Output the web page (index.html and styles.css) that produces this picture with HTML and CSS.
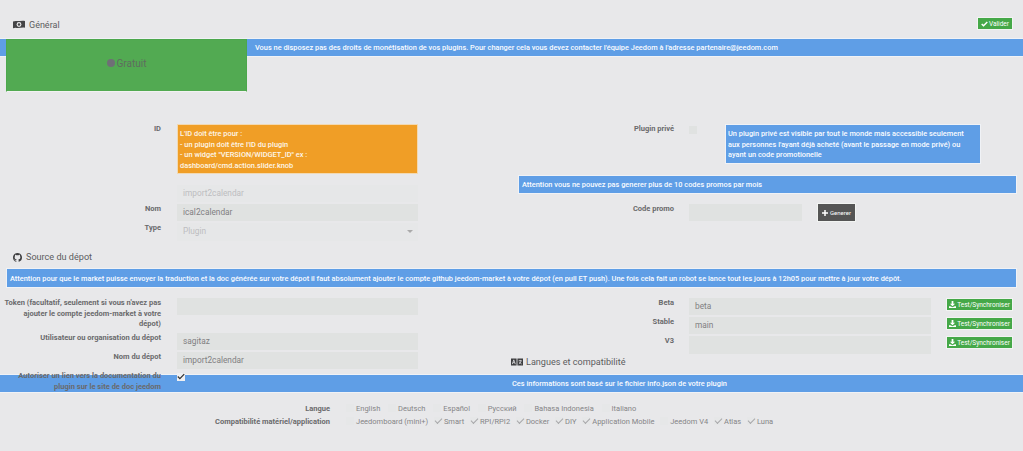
FILE: index.html
```html
<!DOCTYPE html>
<html lang="fr">
<head>
<meta charset="utf-8">
<title>Plugin</title>
<link rel="stylesheet" href="styles.css">
</head>
<body>
<div class="page">
  <header class="top">
    <h3 class="title title-general">
      <svg class="ico-money" viewBox="0 0 14 10"><path fill="#444446" d="M0 1.500 3 .8c3 .8 7-.8 11 0v8c-3-.8-7 .8-11 0l-3 .7z"/><circle cx="7" cy="5" r="2.800" fill="#e8e8ea"/><circle cx="7" cy="5" r="1.400" fill="#444446"/></svg>
      Général
    </h3>
    <a class="btn btn-green btn-valider"><svg class="ico-check" viewBox="0 0 10 8"><path fill="none" stroke="#fff" stroke-width="2" d="M1 4l2.600 2.600L9 1"/></svg>Valider</a>
  </header>

  <section class="monet">
    <div class="gratuit"><span class="dot"></span>Gratuit</div>
    <div class="alert alert-wide">Vous ne disposez pas des droits de monétisation de vos plugins. Pour changer cela vous devez contacter l'équipe Jeedom à l'adresse partenaire@jeedom.com</div>
  </section>

  <section class="cols cols-a">
    <div class="col">
      <div class="row"><label>ID</label><div class="orange">L'ID doit être pour :<br>- un plugin doit être l'ID du plugin<br>- un widget "VERSION/WIDGET_ID" ex :<br>dashboard/cmd.action.slider.knob</div></div>
      <div class="row row-gap"><label></label><div class="input disabled">import2calendar</div></div>
      <div class="row"><label>Nom</label><div class="input">ical2calendar</div></div>
      <div class="row"><label>Type</label><div class="input disabled select">Plugin<span class="caret"></span></div></div>
    </div>
    <div class="col">
      <div class="row row-private">
        <label>Plugin privé</label>
        <span class="box box-private"></span>
        <div class="note">Un plugin privé est visible par tout le monde mais accessible seulement aux personnes l'ayant déjà acheté (avant le passage en mode privé) ou ayant un code promotionelle</div>
      </div>
      <div class="alert alert-promo">Attention vous ne pouvez pas generer plus de 10 codes promos par mois</div>
      <div class="row row-promo">
        <label>Code promo</label>
        <div class="input input-promo"></div>
        <a class="btn btn-dark"><svg class="ico-plus" viewBox="0 0 8 8"><path stroke="#fff" stroke-width="2" d="M4 0v8M0 4h8"/></svg>Generer</a>
      </div>
    </div>
  </section>

  <h3 class="title title-source">
    <svg class="ico-github" viewBox="0 0 16 16"><path fill="#3d3d3f" d="M8 0C3.580 0 0 3.580 0 8c0 3.540 2.290 6.530 5.470 7.590.4.07.55-.17.55-.38 0-.19-.01-.82-.01-1.490-2.010.37-2.530-.49-2.690-.94-.09-.23-.48-.94-.82-1.130-.28-.15-.68-.52-.01-.53.63-.01 1.080.58 1.230.82.72 1.210 1.870.87 2.330.66.07-.52.28-.87.51-1.070-1.780-.2-3.640-.89-3.640-3.950 0-.87.31-1.590.82-2.150-.08-.2-.36-1.020.08-2.120 0 0 .67-.21 2.200.82.64-.18 1.320-.27 2-.27s1.360.09 2 .27c1.530-1.040 2.200-.82 2.200-.82.44 1.100.16 1.920.08 2.120.51.56.82 1.270.82 2.150 0 3.070-1.870 3.750-3.650 3.950.29.25.54.73.54 1.480 0 1.070-.01 1.930-.01 2.200 0 .21.15.46.55.38A8.013 8.013 0 0016 8c0-4.420-3.580-8-8-8z"/></svg>
    Source du dépot
  </h3>
  <div class="alert alert-source">Attention pour que le market puisse envoyer la traduction et la doc générée sur votre dépot il faut absolument ajouter le compte github jeedom-market à votre dépot (en pull ET push). Une fois cela fait un robot se lance tout les jours à 12h05 pour mettre à jour votre dépôt.</div>

  <section class="cols cols-b">
    <div class="col">
      <div class="row row-token"><label>Token (facultatif, seulement si vous n'avez pas ajouter le compte jeedom-market à votre dépot)</label><div class="input"></div></div>
      <div class="row"><label>Utilisateur ou organisation du dépot</label><div class="input">sagitaz</div></div>
      <div class="row"><label>Nom du dépot</label><div class="input">import2calendar</div></div>
      <div class="row row-doc"><label>Autoriser un lien vers la documentation du plugin sur le site de doc jeedom</label><span class="box box-doc"><svg class="ico-check" viewBox="0 0 10 8"><path fill="none" stroke="#333" stroke-width="1.600" d="M1 4l2.600 2.600L9 1"/></svg></span></div>
    </div>
    <div class="col">
      <div class="row row-sync"><label>Beta</label><div class="input">beta</div><a class="btn btn-green btn-sync"><svg class="ico-dl" viewBox="0 0 8 8"><path fill="#fff" d="M3 0h2v3h2L4 6 1 3h2zM0 6h1.500L4 7l2.500-1H8v2H0z"/></svg>Test/Synchroniser</a></div>
      <div class="row row-sync"><label>Stable</label><div class="input">main</div><a class="btn btn-green btn-sync"><svg class="ico-dl" viewBox="0 0 8 8"><path fill="#fff" d="M3 0h2v3h2L4 6 1 3h2zM0 6h1.500L4 7l2.500-1H8v2H0z"/></svg>Test/Synchroniser</a></div>
      <div class="row row-sync"><label>V3</label><div class="input"></div><a class="btn btn-green btn-sync"><svg class="ico-dl" viewBox="0 0 8 8"><path fill="#fff" d="M3 0h2v3h2L4 6 1 3h2zM0 6h1.500L4 7l2.500-1H8v2H0z"/></svg>Test/Synchroniser</a></div>
      <h3 class="title title-lang">
        <svg class="ico-lang" viewBox="0 0 14 8"><path fill="#3d3d3f" d="M0 0h6.500v8H0zM7.500 0H14v8H7.500z"/><path fill="none" stroke="#e8e8ea" stroke-width=".9" d="M1.500 6.500 3.250 1.500 5 6.500M2.200 4.800h2.100M9 2.500h3.500M10.750 1.500v1M11.800 2.500c-.4 2-1.400 3-2.600 3.800M9.700 3.800c.6 1.200 1.500 2 2.700 2.500"/></svg>
        Langues et compatibilité
      </h3>
    </div>
  </section>

  <div class="alert alert-info">Ces informations sont basé sur le fichier info.json de votre plugin</div>

  <section class="opts">
    <div class="opt-row">
      <label>Langue</label>
      <div class="opt-list">
        <span class="opt"><i class="box"></i>English</span>
        <span class="opt"><i class="box"></i>Deutsch</span>
        <span class="opt"><i class="box"></i>Español</span>
        <span class="opt"><i class="box"></i>Русский</span>
        <span class="opt"><i class="box"></i>Bahasa Indonesia</span>
        <span class="opt"><i class="box"></i>Italiano</span>
      </div>
    </div>
    <div class="opt-row">
      <label>Compatibilité matériel/application</label>
      <div class="opt-list opt-list-tight">
        <span class="opt"><i class="box"></i>Jeedomboard (mini+)</span>
        <span class="opt"><i class="box box-on"></i>Smart</span>
        <span class="opt"><i class="box box-on"></i>RPI/RPI2</span>
        <span class="opt"><i class="box box-on"></i>Docker</span>
        <span class="opt"><i class="box box-on"></i>DIY</span>
        <span class="opt"><i class="box box-on"></i>Application Mobile</span>
        <span class="opt"><i class="box"></i>Jeedom V4</span>
        <span class="opt"><i class="box box-on"></i>Atlas</span>
        <span class="opt"><i class="box box-on"></i>Luna</span>
      </div>
    </div>
  </section>
</div>
</body>
</html>
```
FILE: styles.css
```css
* { box-sizing: border-box; }
html, body { margin: 0; padding: 0; height: 100%; overflow: hidden; }
body { background: #e8e8ea; font-family: Roboto, "Liberation Sans", sans-serif; font-size: 7.5px; color: #666; }
.page { width: 1023px; }

.top { height: 38px; display: flex; justify-content: space-between; padding: 17px 10px 0 13px; }
.title { margin: 0; font-weight: 400; display: flex; align-items: center; color: #5c5c5e; }
.title-general { font-size: 9px; height: 15px; gap: 4px; }
.ico-money { width: 12px; height: 9px; }
.btn { display: flex; align-items: center; justify-content: center; color: #fff; border: 1px solid #f2f4f2; }
.btn-green { background: #45a848; }
.btn-valider { width: 36px; height: 13px; font-size: 6.5px; gap: 1px; }
.ico-check { width: 7px; height: 6px; }

.monet { height: 86px; }
.gratuit { float: left; width: 241px; height: 53px; margin: 1px 8px 0 6px; background: #52aa52; border: 1px solid #4ca74c; border-bottom-color: #f2f2f2; display: flex; align-items: center; justify-content: center; font-size: 10px; color: #5f6d5f; padding-bottom: 5px; gap: 2px; }
.dot { width: 8px; height: 8px; border-radius: 50%; background: #6f6f76; }
.alert { background: #5f9ee6; color: #fafcff; border: 1px solid #f0f2f6; font-size: 7.4px; font-weight: 500; display: flex; align-items: center; }
.alert-wide { display: block; height: 19px; line-height: 17px; border-left: 0; border-right: 0; }

.cols { display: grid; grid-template-columns: 512px 511px; }
.cols-a { height: 118px; }
.cols-b { height: 76px; margin-top: 10px; }
.col { display: flex; flex-direction: column; gap: 2px; min-width: 0; }
.row { display: grid; grid-template-columns: 161px 241px; column-gap: 16px; align-items: start; }
.row label { text-align: right; font-weight: 700; color: #6a6a6c; line-height: 10.7px; }
.input { height: 17.2px; background: #e0e2e1; color: #808082; padding-left: 6px; line-height: 17.2px; font-size: 8.3px; position: relative; }
.input.disabled { background: #e6e7e8; color: #bdbdc0; }
.caret { position: absolute; right: 5px; top: 7px; border: 3px solid transparent; border-top: 3px solid #aaa; border-bottom: 0; }
.orange { height: 50px; background: #f09e26; color: #fdf6ea; border: 1px solid #f2d9b2; padding: 4px 2px 0; line-height: 10.7px; font-size: 7.4px; font-weight: 500; }
.row-gap { margin-top: 9px; }

.box { display: block; width: 8px; height: 8px; background: #e0e2e1; }
.box-private { margin-top: 2px; }
.row-private { grid-template-columns: 162px 21px 256px; column-gap: 15px; height: 49px; }
.note { grid-column: 3; height: 40px; background: #5f9ee6; color: #fafcff; border: 1px solid #f0f2f6; padding: 4px 14px 0 2px; line-height: 10.7px; font-size: 7.4px; font-weight: 500; }
.alert-promo { height: 19px; margin: 0 6px; padding-left: 3px; }
.row-promo { grid-template-columns: 162px 113px 39px; column-gap: 15px; margin-top: 8px; }
.input-promo { width: 113px; }
.btn-dark { background: #555; height: 19px; margin-top: -1px; font-size: 6px; gap: 2px; }
.ico-plus { width: 6px; height: 6px; }

.title-source { font-size: 9.1px; gap: 4px; height: 16px; margin: 7px 0 3px 13px; }
.ico-github { width: 9px; height: 9px; }
.alert-source { height: 20px; margin: 0 6px; padding-left: 3px; white-space: nowrap; }

.row-token { height: 33px; }
.row-doc { position: relative; z-index: 1; }
.box-doc { margin-top: 2px; background: #f0f0f2; }
.box-doc .ico-check { display: block; width: 8px; height: 7px; }
.row-sync { grid-template-columns: 162px 242px 67px; column-gap: 15px; }
.btn-sync { height: 13px; font-size: 6.5px; gap: 1px; }
.ico-dl { width: 7px; height: 7px; }
.title-lang { font-size: 9.1px; gap: 3px; height: 16px; margin-left: -1px; margin-top: -2px; }
.ico-lang { width: 12px; height: 8px; }

.alert-info { height: 19px; position: relative; padding-left: 512px; border-left: 0; border-right: 0; }

.opts { padding-top: 10px; display: flex; flex-direction: column; gap: 3px; }
.opt-row { display: grid; grid-template-columns: 330px auto; column-gap: 16px; align-items: center; height: 10px; }
.opt-row label { text-align: right; font-weight: 700; color: #6a6a6c; }
.opt-list { display: flex; gap: 7.8px; color: #858587; }
.opt-list-tight { gap: 5.8px; }
.opt { display: flex; align-items: center; gap: 2px; }
.opt .box { background: #e6e7e8; }
.box-on { position: relative; }
.box-on::after { content: ""; position: absolute; left: 1px; top: 1px; width: 6px; height: 3px; border-left: 1px solid #a8a8aa; border-bottom: 1px solid #a8a8aa; transform: rotate(-45deg); }
```
